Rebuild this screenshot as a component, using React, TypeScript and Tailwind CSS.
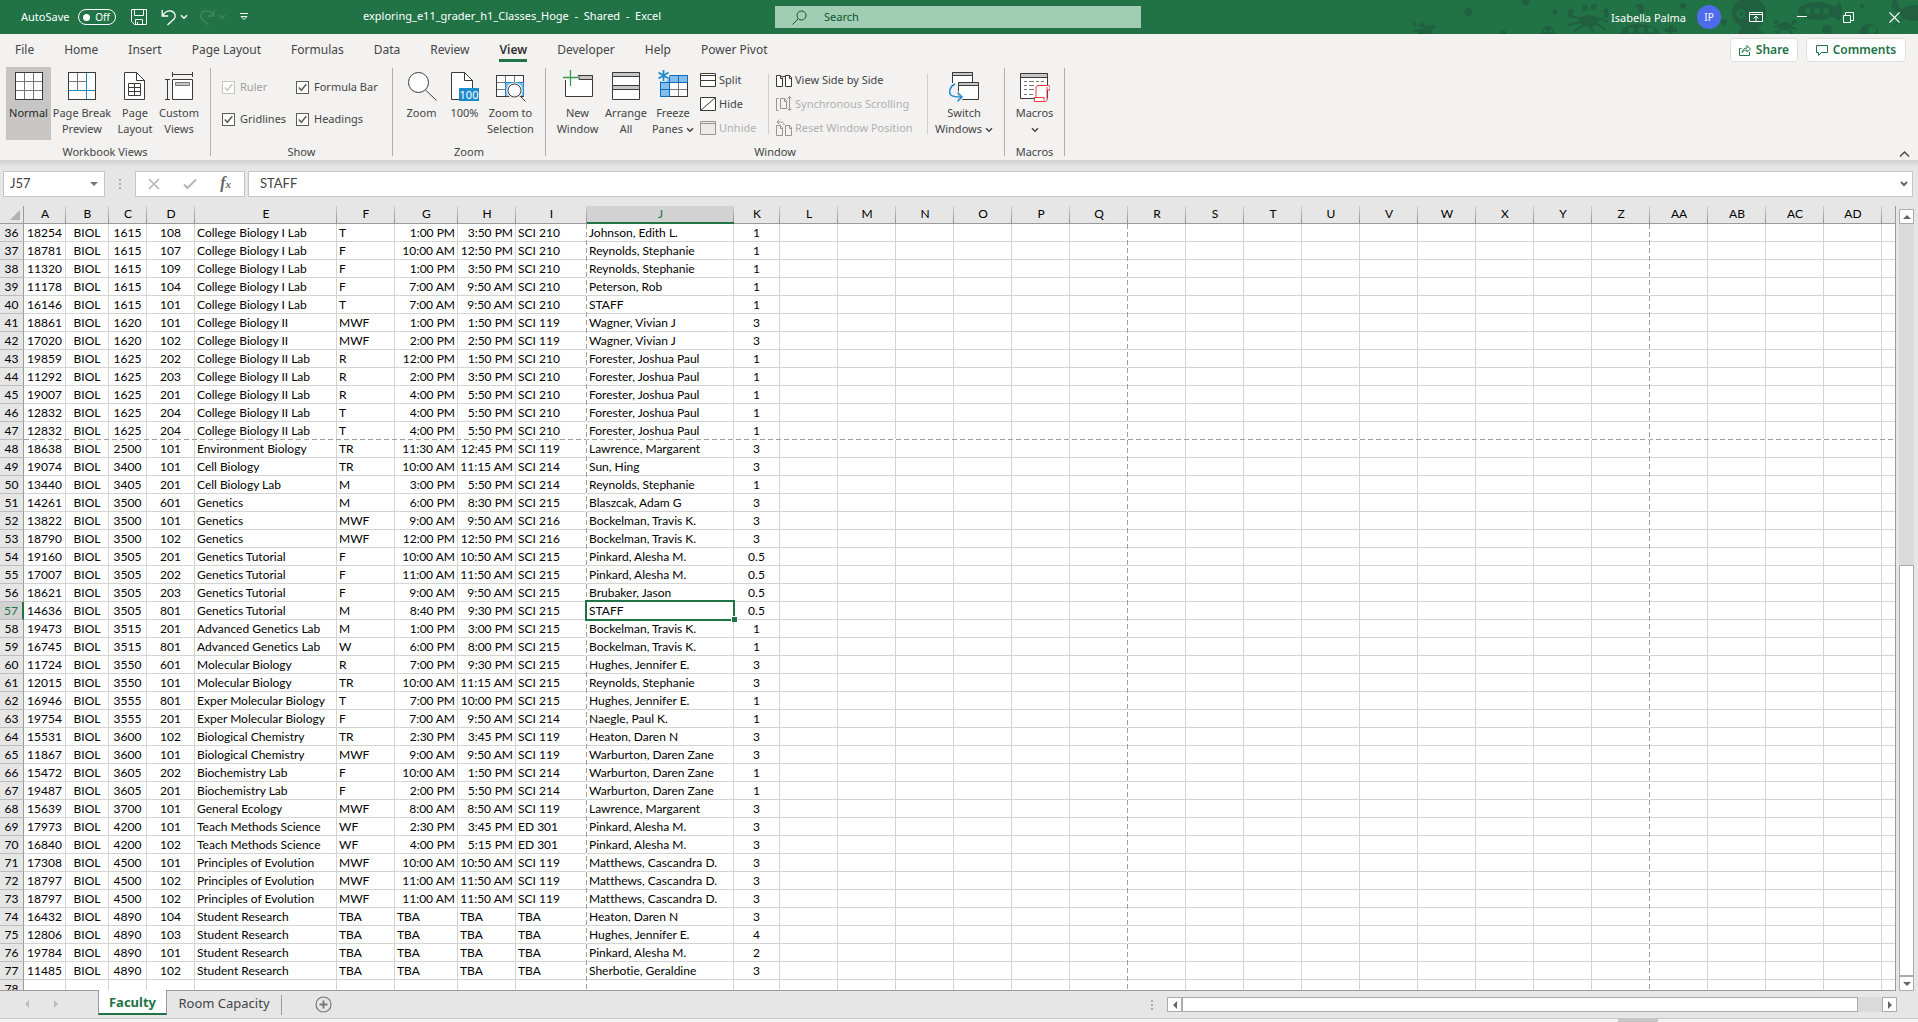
import React, { useState } from "react";

type Row = string[];

const DATA: Row[] = `18254|BIOL|1615|108|College Biology I Lab|T|1:00 PM|3:50 PM|SCI 210|Johnson, Edith L.|1
18781|BIOL|1615|107|College Biology I Lab|F|10:00 AM|12:50 PM|SCI 210|Reynolds, Stephanie|1
11320|BIOL|1615|109|College Biology I Lab|F|1:00 PM|3:50 PM|SCI 210|Reynolds, Stephanie|1
11178|BIOL|1615|104|College Biology I Lab|F|7:00 AM|9:50 AM|SCI 210|Peterson, Rob|1
16146|BIOL|1615|101|College Biology I Lab|T|7:00 AM|9:50 AM|SCI 210|STAFF|1
18861|BIOL|1620|101|College Biology II|MWF|1:00 PM|1:50 PM|SCI 119|Wagner, Vivian J|3
17020|BIOL|1620|102|College Biology II|MWF|2:00 PM|2:50 PM|SCI 119|Wagner, Vivian J|3
19859|BIOL|1625|202|College Biology II Lab|R|12:00 PM|1:50 PM|SCI 210|Forester, Joshua Paul|1
11292|BIOL|1625|203|College Biology II Lab|R|2:00 PM|3:50 PM|SCI 210|Forester, Joshua Paul|1
19007|BIOL|1625|201|College Biology II Lab|R|4:00 PM|5:50 PM|SCI 210|Forester, Joshua Paul|1
12832|BIOL|1625|204|College Biology II Lab|T|4:00 PM|5:50 PM|SCI 210|Forester, Joshua Paul|1
12832|BIOL|1625|204|College Biology II Lab|T|4:00 PM|5:50 PM|SCI 210|Forester, Joshua Paul|1
18638|BIOL|2500|101|Environment Biology|TR|11:30 AM|12:45 PM|SCI 119|Lawrence, Margarent|3
19074|BIOL|3400|101|Cell Biology|TR|10:00 AM|11:15 AM|SCI 214|Sun, Hing|3
13440|BIOL|3405|201|Cell Biology Lab|M|3:00 PM|5:50 PM|SCI 214|Reynolds, Stephanie|1
14261|BIOL|3500|601|Genetics|M|6:00 PM|8:30 PM|SCI 215|Blaszcak, Adam G|3
13822|BIOL|3500|101|Genetics|MWF|9:00 AM|9:50 AM|SCI 216|Bockelman, Travis K.|3
18790|BIOL|3500|102|Genetics|MWF|12:00 PM|12:50 PM|SCI 216|Bockelman, Travis K.|3
19160|BIOL|3505|201|Genetics Tutorial|F|10:00 AM|10:50 AM|SCI 215|Pinkard, Alesha M.|0.5
17007|BIOL|3505|202|Genetics Tutorial|F|11:00 AM|11:50 AM|SCI 215|Pinkard, Alesha M.|0.5
18621|BIOL|3505|203|Genetics Tutorial|F|9:00 AM|9:50 AM|SCI 215|Brubaker, Jason|0.5
14636|BIOL|3505|801|Genetics Tutorial|M|8:40 PM|9:30 PM|SCI 215|STAFF|0.5
19473|BIOL|3515|201|Advanced Genetics Lab|M|1:00 PM|3:00 PM|SCI 215|Bockelman, Travis K.|1
16745|BIOL|3515|801|Advanced Genetics Lab|W|6:00 PM|8:00 PM|SCI 215|Bockelman, Travis K.|1
11724|BIOL|3550|601|Molecular Biology|R|7:00 PM|9:30 PM|SCI 215|Hughes, Jennifer E.|3
12015|BIOL|3550|101|Molecular Biology|TR|10:00 AM|11:15 AM|SCI 215|Reynolds, Stephanie|3
16946|BIOL|3555|801|Exper Molecular Biology|T|7:00 PM|10:00 PM|SCI 215|Hughes, Jennifer E.|1
19754|BIOL|3555|201|Exper Molecular Biology|F|7:00 AM|9:50 AM|SCI 214|Naegle, Paul K.|1
15531|BIOL|3600|102|Biological Chemistry|TR|2:30 PM|3:45 PM|SCI 119|Heaton, Daren N|3
11867|BIOL|3600|101|Biological Chemistry|MWF|9:00 AM|9:50 AM|SCI 119|Warburton, Daren Zane|3
15472|BIOL|3605|202|Biochemistry Lab|F|10:00 AM|1:50 PM|SCI 214|Warburton, Daren Zane|1
19487|BIOL|3605|201|Biochemistry Lab|F|2:00 PM|5:50 PM|SCI 214|Warburton, Daren Zane|1
15639|BIOL|3700|101|General Ecology|MWF|8:00 AM|8:50 AM|SCI 119|Lawrence, Margarent|3
17973|BIOL|4200|101|Teach Methods Science|WF|2:30 PM|3:45 PM|ED 301|Pinkard, Alesha M.|3
16840|BIOL|4200|102|Teach Methods Science|WF|4:00 PM|5:15 PM|ED 301|Pinkard, Alesha M.|3
17308|BIOL|4500|101|Principles of Evolution|MWF|10:00 AM|10:50 AM|SCI 119|Matthews, Cascandra D.|3
18797|BIOL|4500|102|Principles of Evolution|MWF|11:00 AM|11:50 AM|SCI 119|Matthews, Cascandra D.|3
18797|BIOL|4500|102|Principles of Evolution|MWF|11:00 AM|11:50 AM|SCI 119|Matthews, Cascandra D.|3
16432|BIOL|4890|104|Student Research|TBA|TBA|TBA|TBA|Heaton, Daren N|3
12806|BIOL|4890|103|Student Research|TBA|TBA|TBA|TBA|Hughes, Jennifer E.|4
19784|BIOL|4890|101|Student Research|TBA|TBA|TBA|TBA|Pinkard, Alesha M.|2
11485|BIOL|4890|102|Student Research|TBA|TBA|TBA|TBA|Sherbotie, Geraldine|3`
  .split("\n")
  .map((line) => line.split("|"));

const FIRST_ROW = 36;
const ACTIVE_ROW = 57;

const COLUMNS: { name: string; width: string }[] = [
  { name: "A", width: "w-[42px]" },
  { name: "B", width: "w-[43px]" },
  { name: "C", width: "w-[38px]" },
  { name: "D", width: "w-[48px]" },
  { name: "E", width: "w-[142px]" },
  { name: "F", width: "w-[58px]" },
  { name: "G", width: "w-[63px]" },
  { name: "H", width: "w-[58px]" },
  { name: "I", width: "w-[71px]" },
  { name: "J", width: "w-[147px]" },
  { name: "K", width: "w-[46px]" },
  ..."L M N O P Q R S T U V W X Y Z AA AB AC AD".split(" ").map((name) => ({ name, width: "w-[58px]" })),
  { name: "", width: "w-[58px]" },
];

const CENTERED = [0, 1, 2, 3, 10];

function alignment(col: number, value: string) {
  if (CENTERED.includes(col)) return "text-center";
  if ((col === 6 || col === 7) && value !== "TBA") return "text-right";
  return "text-left";
}

/* ---------- small glyphs ---------- */

function Chevron({ className = "" }: { className?: string }) {
  return (
    <svg width="8" height="6" viewBox="0 0 8 6" className={"inline-block shrink-0 align-middle " + className} fill="none" stroke="currentColor" strokeWidth="1.5" aria-hidden="true">
      <path d="M1 1.2 4 4.2 7 1.2" />
    </svg>
  );
}

function Triangle({ dir, className = "" }: { dir: "up" | "down" | "left" | "right"; className?: string }) {
  const d = { up: "M0 6 4 2 8 6Z", down: "M0 2H8L4 6Z", left: "M6 0V8L2 4Z", right: "M2 0V8L6 4Z" }[dir];
  return (
    <svg width="8" height="8" viewBox="0 0 8 8" className={className} fill="currentColor" aria-hidden="true">
      <path d={d} />
    </svg>
  );
}

/* ---------- title bar ---------- */

function SeaPattern() {
  return (
    <svg className="absolute top-0 right-0" width="518" height="34" viewBox="1400 0 518 34" fill="#206040" stroke="#206040" aria-hidden="true">
      <g stroke="none">
        <circle cx="1468.500" cy="12" r="4" />
        <circle cx="1526" cy="1" r="4" />
        <circle cx="1555" cy="12" r="2.500" />
        <circle cx="1503" cy="33" r="3" />
        <path d="M1541 34c0-5 3-8 7-8s7 3 7 8z" />
        <path d="M1418 34c1-5 4-7 8-7s6 3 7 7z" />
        <circle cx="1421" cy="25" r="2" />
        <circle cx="1427" cy="26" r="1.500" />
        <path d="M1413 20c4 2 4 5 2 8-2-2-3-5-2-8zM1428 28c2-3 4-3 7-3 0 4-3 6-6 5z" />
        <ellipse cx="1589" cy="21" rx="10" ry="6" />
        <path d="M1570 8c-4 5-3 10 3 10 0-3 0-4-2-5 2 0 3-1 3-3zM1607 8c3 5 2 10-3 10 0-3 0-4 2-5-2 0-3-1-3-3z" />
        <circle cx="1585" cy="8" r="3" />
        <circle cx="1594" cy="7" r="3" />
        <path d="M1620 34c1-6 8-10 19-10s20 4 20 10z" />
        <path d="M1636 4h5c4 1 3 6 2 9h-4c1-4 0-6-3-7z" />
        <circle cx="1683" cy="6" r="3" />
        <circle cx="1724" cy="22" r="3" />
        <path d="M1669 25h4v3h4v4h-4v2h-4v-2h-4v-4h4z" />
        <path d="M1732 13c0-9 6-15 16-15s18 6 18 14c0 7-4 12-8 15l6 7h-27l5-7c-6-3-10-7-10-14z" />
        <ellipse cx="1817" cy="11" rx="19" ry="9" />
        <path d="M1832 9l8-7c3 5 2 14-1 19l-8-6z" />
        <circle cx="1862" cy="6" r="2.500" />
        <ellipse cx="1785" cy="26" rx="6" ry="4" />
        <path d="M1775 19c-2 4 0 6 4 6l-1-4zM1795 19c2 4 0 6-4 6l1-4z" />
        <circle cx="1827" cy="30" r="5" />
        <circle cx="1869" cy="34" r="10" />
        <ellipse cx="1914" cy="13" rx="13" ry="8" />
        <path d="M1895 -1c-5 4-5 10 2 13l8-2c-5-1-7-4-7-8z" />
      </g>
      <g fill="none" strokeWidth="2">
        <path d="M1580 18l-12-2M1580 22l-12 3M1583 25l-9 7M1598 18l10 4M1597 24l9 6M1590 26l4 7" />
        <path d="M1780 26l-6 1M1781 29l-5 4M1790 27l7 2M1789 29l3 5" />
        <path d="M1904 12l-12 6M1905 17l-12 10" />
        <path d="M1424 27l-3-5M1428 28l-15 4" />
      </g>
      <g fill="#217346" stroke="none">
        <circle cx="1631" cy="30" r="3" />
        <circle cx="1641" cy="30" r="3" />
        <circle cx="1651" cy="30" r="3" />
        <circle cx="1741" cy="14" r="4.500" />
        <circle cx="1808" cy="11" r="3" />
        <circle cx="1817" cy="11" r="3" />
        <circle cx="1826" cy="11" r="3" />
        <circle cx="1872" cy="30" r="4" />
        <circle cx="1545" cy="31" r="1.500" />
        <circle cx="1551" cy="31" r="1.500" />
      </g>
      <circle cx="1741" cy="14" r="2" stroke="none" />
    </svg>
  );
}

function TitleBar() {
  const [autoSave, setAutoSave] = useState(false);
  return (
    <header className="relative flex h-[34px] shrink-0 items-center overflow-hidden bg-[#217346] text-[11px] text-white">
      <SeaPattern />
      <div className="flex w-[363px] shrink-0 items-center pl-[21px]">
        <span className="w-[57px]" id="autosave">AutoSave</span>
        <button role="switch" aria-checked={autoSave} aria-labelledby="autosave" onClick={() => setAutoSave(!autoSave)} className="flex h-4 w-[38px] items-center justify-between rounded-full border border-white pr-[5px] pl-[4px] text-[10px] leading-none">
          <span className="size-[7px] rounded-full bg-white" />
          {autoSave ? "On" : "Off"}
        </button>
        <button aria-label="Save" className="ml-[15px]">
          <svg width="16" height="16" viewBox="0 0 16 16" fill="none" stroke="#fff" aria-hidden="true">
            <path d="M.5.5h15v15H3.500l-3-3zM3.500.5v6h9v-6M4.500 15.500v-5h7v5M6.500 13v2.500" />
          </svg>
        </button>
        <button aria-label="Undo" className="ml-[14px] flex items-center">
          <svg width="16" height="17" viewBox="0 0 16 17" fill="none" stroke="#fff" strokeWidth="1.300" aria-hidden="true">
            <path d="M1.200 1v6h6M1.500 6.500C4 3 7 1.500 10 2c4 .8 5.500 5 3 8l-6.500 6" />
          </svg>
          <Chevron className="ml-[3px]" />
        </button>
        <button aria-label="Redo" disabled className="ml-[11px] flex items-center text-[#438762]">
          <svg width="16" height="17" viewBox="0 0 16 17" fill="none" stroke="#438762" strokeWidth="1.300" aria-hidden="true">
            <path d="M14.800 1v6h-6M14.500 6.500C12 3 9 1.500 6 2c-4 .8-5.500 5-3 8l6.500 6" />
          </svg>
          <Chevron className="ml-[3px]" />
        </button>
        <button aria-label="Customize Quick Access Toolbar" className="ml-[14px]">
          <svg width="8" height="8" viewBox="0 0 8 8" fill="none" stroke="#fff" aria-hidden="true">
            <path d="M0 .5h8M1 3.500h6L4 6.500z" />
          </svg>
        </button>
      </div>
      <h1 className="w-[412px] shrink-0 pb-[2px] whitespace-pre">exploring_e11_grader_h1_Classes_Hoge  -  Shared  -  Excel</h1>
      <label className="flex h-[22px] w-[366px] items-center bg-[#a0cdb4] pl-[17px]">
        <svg width="15" height="15" viewBox="0 0 15 15" fill="none" stroke="#13532f" aria-hidden="true">
          <circle cx="9.500" cy="5.500" r="4.500" />
          <path d="M6 9 .5 14.500" />
        </svg>
        <input aria-label="Search" placeholder="Search" className="ml-[17px] min-w-0 flex-1 bg-transparent outline-none placeholder:text-[#0b5529]" />
      </label>
      <div className="relative ml-auto flex shrink-0 items-center pr-[18px]">
        <span className="pt-[2px]">Isabella Palma</span>
        <span className="ml-[11px] flex size-6 items-center justify-center rounded-full bg-[#4f6bed] text-[10px]">IP</span>
        <button aria-label="Ribbon Display Options" className="ml-7">
          <svg width="14" height="12" viewBox="0 0 14 12" fill="none" stroke="#fff" aria-hidden="true">
            <path d="M.5 1.500h13v9H.5zM.5 3.500h13M7 10V5.500M4.500 7.500 7 5l2.500 2.500" />
          </svg>
        </button>
        <button aria-label="Minimize" className="ml-[34px] h-6">
          <svg width="10" height="10" viewBox="0 0 10 10" stroke="#fff" aria-hidden="true"><path d="M0 4.500h10" /></svg>
        </button>
        <button aria-label="Restore" className="ml-[36px]">
          <svg width="11" height="11" viewBox="0 0 11 11" fill="none" stroke="#fff" aria-hidden="true"><path d="M.5 3.500h7v7h-7zM2.500 3V.5h8v8H8" /></svg>
        </button>
        <button aria-label="Close" className="ml-[35px]">
          <svg width="11" height="11" viewBox="0 0 11 11" stroke="#fff" strokeWidth="1.100" aria-hidden="true"><path d="M.5.5l10 10M10.500.5l-10 10" /></svg>
        </button>
      </div>
    </header>
  );
}

/* ---------- ribbon tabs ---------- */

const TABS = ["File", "Home", "Insert", "Page Layout", "Formulas", "Data", "Review", "View", "Developer", "Help", "Power Pivot"];

function RibbonTabs() {
  return (
    <nav className="flex h-[30px] items-end justify-between pr-3 pb-[2px] pl-[15px] text-xs text-[#444]">
      <div className="flex gap-[30px]">
        {TABS.map((tab) => (
          <button key={tab} className={"border-b-[3px] leading-[18px] " + (tab === "View" ? "border-[#217346] font-semibold text-[#333]" : "border-transparent")}>
            {tab}
          </button>
        ))}
      </div>
      <div className="flex gap-[8px] font-semibold text-[#217346]">
        <button className="flex h-6 w-[68px] items-center justify-center gap-[5px] rounded-sm border border-[#e1dfdd] bg-white">
          <svg width="12" height="12" viewBox="0 0 12 12" fill="none" stroke="#217346" aria-hidden="true">
            <path d="M2.500 4.500h-2v7h10V8M3 8.500c.5-3 2-4.500 5-4.500V1.500L11.500 5 8 8V6C6 6 4.500 6.500 3 8.500z" />
          </svg>
          Share
        </button>
        <button className="flex h-6 w-[100px] items-center justify-center gap-[5px] rounded-sm border border-[#e1dfdd] bg-white">
          <svg width="12" height="11" viewBox="0 0 12 11" fill="none" stroke="#217346" aria-hidden="true">
            <path d="M.5.5h11v7h-6l-3 3v-3h-2z" />
          </svg>
          Comments
        </button>
      </div>
    </nav>
  );
}

/* ---------- ribbon icons ---------- */

const INK = "#3b3a39";

function Icon({ children, w = 30 }: { children: React.ReactNode; w?: number }) {
  return (
    <svg width={w} height="34" viewBox={`0 0 ${w} 34`} fill="none" stroke={INK} strokeWidth="1" className="block shrink-0" aria-hidden="true">
      {children}
    </svg>
  );
}

const NormalIcon = () => (
  <Icon w={28}>
    <path d="M.5 3.500h27v27H.5z" fill="#fff" />
    <path d="M9.500 4v26M18.500 4v26M1 12.500h26M1 21.500h26" stroke="#797775" />
    <path d="M.5 3.500h27v27H.5z" />
  </Icon>
);
const PageBreakIcon = () => (
  <Icon w={28}>
    <path d="M.5 3.500h27v27H.5z" fill="#fff" />
    <path d="M9.500 4v17M1 12.500h17" stroke="#797775" />
    <path d="M.5 3.500h27v27H.5z" />
    <path d="M18.500 4v26M1 21.500h26" stroke="#1e8bcd" />
  </Icon>
);
const PageLayoutIcon = () => (
  <Icon w={22}>
    <path d="M.5 3.500h12l8 8v19H.5z" fill="#fff" />
    <path d="M12.500 3.500v8h8" />
    <path d="M4.500 14.500h12v12h-12zM5 18.500h11M5 22.500h11M10.500 15v11" />
  </Icon>
);
const CustomViewsIcon = () => (
  <Icon w={28}>
    <path d="M7.500 10.500h20v20h-20z" fill="#fff" />
    <path d="M10.500 13.500h14v3h-14z" fill="#c8c6c4" stroke="#797775" />
    <path d="M7.500 3v5M27.500 3v5M8 5.500h19M0 10.500h5M0 30.500h5M2.500 11v19" />
  </Icon>
);
const ZoomIcon = () => (
  <Icon w={30}>
    <circle cx="11.500" cy="13.500" r="10" fill="#fff" />
    <path d="M18.500 21 29.500 31.500" />
  </Icon>
);
const HundredIcon = () => (
  <Icon w={28}>
    <path d="M.5 3.500h13l8 8v19H.5z" fill="#fff" />
    <path d="M13.500 3.500v8h8" />
    <path d="M8 19h20v13H8z" fill="#1e8bcd" stroke="none" />
    <text x="18" y="30" fill="#fff" stroke="none" fontSize="11" textAnchor="middle" fontFamily="Noto Sans, sans-serif">100</text>
  </Icon>
);
const ZoomSelectionIcon = () => (
  <Icon w={30}>
    <path d="M.5 6.500h27v21H.5z" fill="#fff" />
    <path d="M9.500 13.500h18v14h-18z" fill="#83beec" stroke="none" />
    <path d="M9.500 7v20M18.500 7v7M1 13.500h26M1 20.500h9" stroke="#797775" />
    <path d="M.5 6.500h27v21H.5z" />
    <path d="M9.500 27V13.500h18V27" stroke="#1e8bcd" />
    <path d="M23 26l6.500 6.500" />
    <circle cx="18.500" cy="21.500" r="6.500" fill="#fff" stroke="#f3f2f1" strokeWidth="3" />
    <circle cx="18.500" cy="21.500" r="6.500" fill="#fff" />
  </Icon>
);
const NewWindowIcon = () => (
  <Icon w={30}>
    <path d="M2.500 6.500h27v21h-27z" fill="#fff" />
    <path d="M16 6.500h13.500v4H16z" fill="#c8c6c4" />
    <path d="M0 3h15v8H0z" fill="#f3f2f1" stroke="none" />
    <path d="M3 11h12v1H3z" fill="#fff" stroke="none" />
    <path d="M7.500 1v16M0 8.500h15" stroke="#3a9b50" strokeWidth="1.300" />
  </Icon>
);
const ArrangeIcon = () => (
  <Icon w={28}>
    <path d="M.5 3.500h27v27H.5z" fill="#fff" />
    <path d="M.5 3.500h27v4H.5zM.5 16.500h27v4H.5z" fill="#c8c6c4" />
  </Icon>
);
const FreezeIcon = () => (
  <Icon w={30}>
    <path d="M2.500 6.500h27v21h-27z" fill="#fff" />
    <path d="M2.500 6.500h27v7h-18v14h-9z" fill="#83beec" stroke="none" />
    <path d="M20.500 14v13M12 20.500h17" stroke="#797775" />
    <path d="M11.500 27.500h18V14" />
    <path d="M29.500 13.500v-7h-27v21h9M11.500 7v20M20.500 7v6M3 13.500h26M3 20.500h9" stroke="#0f6cbd" />
    <circle cx="5" cy="6.500" r="6.500" fill="#f3f2f1" stroke="none" />
    <path d="M5.500 1v11M.5 3.500l10 6M.5 9.500l10-6" stroke="#1e8bcd" strokeWidth="1.800" />
  </Icon>
);
const SwitchIcon = () => (
  <Icon w={30}>
    <path d="M3.500 3.500h20v17h-20z" fill="#fff" />
    <path d="M3.500 3.500h20v3h-20z" fill="#c8c6c4" />
    <path d="M0 14h12v20H0z" fill="#f3f2f1" stroke="none" />
    <path d="M9.500 13.500h20v17h-20z" fill="#fff" />
    <path d="M9.500 13.500h20v3h-20z" fill="#c8c6c4" />
    <path d="M7 15c-5 2-7 9-3.500 11.500 2 1.500 5 1.500 10 1.500M9 23l5 5-5 4.500" stroke="#f3f2f1" strokeWidth="3" />
    <path d="M6 15c-5 2-7 9-3.500 11.500 2 1.500 5 1.500 10 1.500M8.500 23.500l4.500 4.500-4.500 4.500" stroke="#1e8bcd" strokeWidth="1.400" />
  </Icon>
);
const MacrosIcon = () => (
  <Icon w={30}>
    <path d="M.5 4.500h27v25H.5z" fill="#fff" />
    <path d="M.5 4.500h27v4H.5z" fill="#c8c6c4" />
    <path d="M4 12.500h3M9 12.500h5M16 12.500h3M21 12.500h3M4 16.500h3M9 16.500h5M4 20.500h3M9 20.500h5M4 25.500h3M9 25.500h4" stroke="#797775" />
    <path d="M14.500 32.500h10.500c2 0 2-2 2-3V21h3v-3c0-1-1-1.500-2-1.500H18c-1.500 0-2 1-2 2.500v9.500h-1.500z" fill="#fff" stroke="#e8393c" />
    <path d="M14.500 28.500h9.500v3M27 21v-3" stroke="#e8393c" />
  </Icon>
);

/* ---------- ribbon ---------- */

function BigButton({ icon, lines, width, active, menu }: { icon: React.ReactNode; lines: string[]; width: string; active?: boolean; menu?: boolean }) {
  return (
    <button className={"flex h-[73px] shrink-0 flex-col items-center pt-[2px] " + width + (active ? " bg-[#c8c6c4] text-[#262626]" : "")}>
      {icon}
      <span className="mt-[2px] leading-4 whitespace-nowrap">
        {lines.map((line, i) => (
          <span key={i} className="block h-4">
            {line}
            {menu && i === lines.length - 1 && <Chevron className={line ? "ml-[3px]" : ""} />}
          </span>
        ))}
      </span>
    </button>
  );
}

function Group({ label, children, className = "", inner = "" }: { label: string; children: React.ReactNode; className?: string; inner?: string }) {
  return (
    <section aria-label={label} className={"flex h-[88px] shrink-0 flex-col border-r border-[#b1b0af] " + className}>
      <div className={"-mt-px flex h-[77px] shrink-0 " + inner}>{children}</div>
      <div className="text-center leading-4">{label}</div>
    </section>
  );
}

function Check({ label, on, disabled }: { label: string; on: boolean; disabled?: boolean }) {
  return (
    <label className={"flex h-4 items-center gap-[5px] whitespace-nowrap " + (disabled ? "text-[#a19f9d]" : "")}>
      <span className="grid size-[13px] place-items-center">
        <input type="checkbox" defaultChecked={on} disabled={disabled} className="peer col-start-1 row-start-1 size-[13px] appearance-none border border-[#605e5c] bg-white disabled:border-[#c8c6c4]" />
        <svg width="9" height="9" viewBox="0 0 9 9" fill="none" stroke={disabled ? "#c8c6c4" : "#605e5c"} strokeWidth="1.600" className="pointer-events-none invisible col-start-1 row-start-1 peer-checked:visible" aria-hidden="true">
          <path d="M.8 4.500 3.300 7.200 8.300 1.300" />
        </svg>
      </span>
      {label}
    </label>
  );
}

function SmallButton({ icon, label, disabled }: { icon: React.ReactNode; label: string; disabled?: boolean }) {
  return (
    <button disabled={disabled} className={"flex h-6 shrink-0 items-center gap-[3px] whitespace-nowrap " + (disabled ? "text-[#b1b0af]" : "")}>
      <svg width="16" height="18" viewBox="0 0 16 18" fill="none" stroke={disabled ? "#979593" : INK} className="shrink-0" aria-hidden="true">
        {icon}
      </svg>
      {label}
    </button>
  );
}

const pages = "M.5 4.500h4l2 2v9h-6zM9.500 4.500h4l2 2v9h-6zM4.500 4.500v3h2M13.500 4.500v3h2M6.500 5.500h3";

function Ribbon() {
  return (
    <div className="flex h-[96px] pt-[4px] text-[11px] text-[#444]">
      <Group label="Workbook Views" className="w-[211px]" inner="pl-[6px]">
        <BigButton icon={<NormalIcon />} lines={["Normal"]} width="w-[45px]" active />
        <BigButton icon={<PageBreakIcon />} lines={["Page Break", "Preview"]} width="w-[62px]" />
        <BigButton icon={<PageLayoutIcon />} lines={["Page", "Layout"]} width="w-[44px]" />
        <BigButton icon={<CustomViewsIcon />} lines={["Custom", "Views"]} width="w-[44px]" />
      </Group>
      <Group label="Show" className="w-[182px]">
        <div className="grid grid-cols-[74px_1fr] content-start gap-y-4 pt-[12px] pl-[11px]">
          <Check label="Ruler" on disabled />
          <Check label="Formula Bar" on />
          <Check label="Gridlines" on />
          <Check label="Headings" on />
        </div>
      </Group>
      <Group label="Zoom" className="w-[153px]" inner="pl-[8px]">
        <BigButton icon={<ZoomIcon />} lines={["Zoom"]} width="w-[41px]" />
        <BigButton icon={<HundredIcon />} lines={["100%"]} width="w-[45px]" />
        <BigButton icon={<ZoomSelectionIcon />} lines={["Zoom to", "Selection"]} width="w-[47px]" />
      </Group>
      <Group label="Window" className="w-[459px]" inner="pl-[8px]">
        <BigButton icon={<NewWindowIcon />} lines={["New", "Window"]} width="w-[47px]" />
        <BigButton icon={<ArrangeIcon />} lines={["Arrange", "All"]} width="w-[50px]" />
        <BigButton icon={<FreezeIcon />} lines={["Freeze", "Panes"]} width="w-[44px]" menu />
        <div className="my-[7px] ml-[5px] flex h-[60px] w-[69px] shrink-0 flex-col justify-center border-r border-[#d2d0ce]">
          <SmallButton label="Split" icon={<><path d="M.5 2.500h15v13H.5z" fill="#fff" /><path d="M.5 4.500h15M.5 9.500h15" /></>} />
          <SmallButton label="Hide" icon={<><path d="M.5 2.500h15v13H.5z" fill="#fff" /><path d="M.5 15.500l15-13" /></>} />
          <SmallButton label="Unhide" disabled icon={<path d="M.5 2.500h15v13H.5zM.5 4.500h15" fill="#edebe9" />} />
        </div>
        <div className="my-[7px] flex h-[60px] w-[159px] shrink-0 flex-col justify-center border-r border-[#d2d0ce] pl-[7px]">
          <SmallButton label="View Side by Side" icon={<path d={pages} fill="#fff" />} />
          <SmallButton label="Synchronous Scrolling" disabled icon={<path d="M2.500 3.500h-2v12h2M4.500 3.500h4l2 2v8h-6zM8.500 3.500v3h2M13.500 1.500v14M11.500 3.500l2-2 2 2M11.500 13.500l2 2 2-2" />} />
          <SmallButton label="Reset Window Position" disabled icon={<><path d="M.5 6.500h4l2 2v8h-6zM9.500 6.500h4l2 2v8h-6zM4.500 6.500v3h2M13.500 6.500v3h2" /><path d="M3.500.5 1 3l2.500 2.500M1 3h4c2 0 3 1 3 3" /></>} />
        </div>
        <div className="w-[2px]" />
        <BigButton icon={<SwitchIcon />} lines={["Switch", "Windows"]} width="w-[68px]" menu />
      </Group>
      <Group label="Macros" className="w-[60px]" inner="justify-center">
        <BigButton icon={<MacrosIcon />} lines={["Macros", ""]} width="w-[52px]" menu />
      </Group>
      <button aria-label="Collapse the Ribbon" className="mr-[8px] mb-[2px] ml-auto self-end">
        <svg width="11" height="8" viewBox="0 0 11 8" fill="none" stroke="#444" strokeWidth="1.400" aria-hidden="true"><path d="M1 6.500 5.500 2 10 6.500" /></svg>
      </button>
    </div>
  );
}

/* ---------- formula bar ---------- */

function FormulaBar() {
  return (
    <div className="flex h-[46px] shrink-0 items-start bg-[#e6e6e6] bg-[linear-gradient(#cfcfcf,#e6e6e6_7px)] pt-[11px] pr-[5px] pl-[3px] font-[Lato,sans-serif] text-[13px] text-[#444]">
      <div className="flex h-[26px] w-[102px] shrink-0 items-center border border-[#c6c6c6] bg-white">
        <input aria-label="Name Box" defaultValue="J57" className="min-w-0 flex-1 pl-[6px] outline-none" />
        <button aria-label="Named ranges" className="pr-[6px] text-[#767676]"><Triangle dir="down" /></button>
      </div>
      <div className="flex h-[26px] w-[30px] shrink-0 flex-col items-center justify-center gap-[2px]" aria-hidden="true">
        <span className="size-[2px] bg-[#ababab]" />
        <span className="size-[2px] bg-[#ababab]" />
        <span className="size-[2px] bg-[#ababab]" />
      </div>
      <div className="flex h-[26px] w-[110px] shrink-0 items-center justify-between border border-[#c6c6c6] bg-white pr-[13px] pl-[12px]">
        <button aria-label="Cancel" disabled>
          <svg width="12" height="12" viewBox="0 0 12 12" stroke="#b5b5b5" strokeWidth="1.600" aria-hidden="true"><path d="M1 1l10 10M11 1 1 11" /></svg>
        </button>
        <button aria-label="Enter" disabled>
          <svg width="14" height="12" viewBox="0 0 14 12" fill="none" stroke="#b5b5b5" strokeWidth="2" aria-hidden="true"><path d="M1 6.500 4.500 10 13 1.500" /></svg>
        </button>
        <button aria-label="Insert Function" className="pb-[2px] font-['Liberation_Serif',serif] text-base leading-4 font-bold text-[#666] italic">
          f<span className="text-[11px]">x</span>
        </button>
      </div>
      <div className="ml-[3px] flex h-[26px] flex-1 items-center border border-[#c6c6c6] bg-white">
        <input aria-label="Formula Bar" defaultValue="STAFF" className="min-w-0 flex-1 pl-[11px] outline-none" />
        <button aria-label="Expand Formula Bar" className="flex pr-1 text-[#666]">
          <svg width="8" height="6" viewBox="0 0 8 6" fill="none" stroke="currentColor" strokeWidth="2" aria-hidden="true"><path d="M1 1 4 4 7 1" /></svg>
        </button>
      </div>
    </div>
  );
}

/* ---------- worksheet ---------- */

const H_DASH = "bg-[repeating-linear-gradient(90deg,#a0a0a0_0_5px,#fff_5px_8px)]";
const V_DASH = "bg-[repeating-linear-gradient(#a0a0a0_0_5px,#fff_5px_8px)]";

function Sheet() {
  return (
    <div className="relative min-w-0 flex-1 overflow-hidden border-r border-b border-[#9b9b9b] bg-white">
      <table className="w-[1940px] table-fixed border-separate border-spacing-0 font-[Lato,sans-serif] text-xs text-black [font-variant-ligatures:none]">
        <colgroup>
          <col className="w-[24px]" />
          {COLUMNS.map((c) => (
            <col key={c.name} className={c.width} />
          ))}
        </colgroup>
        <thead>
          <tr>
            <th aria-label="Select all" className="h-[17px] border-r border-b border-[#9b9b9b] bg-[#e6e6e6] p-0">
              <svg width="10" height="10" viewBox="0 0 10 10" fill="#b1b1b1" className="mr-[3px] ml-auto block" aria-hidden="true"><path d="M10 0v10H0z" /></svg>
            </th>
            {COLUMNS.map((c) => (
              <th
                key={c.name}
                scope="col"
                className={
                  "h-[18px] bg-[linear-gradient(#d0d0d0,#8f8f8f)] bg-[length:1px_100%] bg-right bg-no-repeat p-0 align-top leading-[16px] font-normal " +
                  (c.name === "J" ? "border-b-2 border-[#217346] bg-[#d2d2d2] text-[#217346]" : "border-b border-[#9b9b9b] bg-[#e6e6e6]")
                }
              >
                {c.name}
              </th>
            ))}
          </tr>
        </thead>
        <tbody>
          {[...DATA, []].map((row, r) => {
            const n = FIRST_ROW + r;
            const active = n === ACTIVE_ROW;
            return (
              <tr key={n}>
                <th
                  scope="row"
                  className={
                    "h-[18px] border-b border-b-[#bdbdbd] p-0 text-center leading-[17px] font-normal " +
                    (active ? "border-r-2 border-r-[#217346] bg-[#d2d2d2] text-[#217346]" : "border-r border-r-[#9b9b9b] bg-[#e6e6e6]")
                  }
                >
                  {n}
                </th>
                {COLUMNS.map((c, i) => {
                  const value = row[i] ?? "";
                  return (
                    <td key={c.name} className={"relative h-[18px] border-r border-b border-[#d4d4d4] px-[2px] py-0 leading-[17px] whitespace-nowrap " + alignment(i, value)}>
                      {value}
                      {active && c.name === "J" && (
                        <span className="absolute -inset-[2px] z-10 border-2 border-[#217346]">
                          <span className="absolute -right-[4px] -bottom-[3px] size-[6px] border-t border-l border-white bg-[#217346]" />
                        </span>
                      )}
                    </td>
                  );
                })}
              </tr>
            );
          })}
        </tbody>
      </table>
      <div className={"absolute top-[233px] right-0 left-[24px] h-px " + H_DASH} />
      <div className={"absolute top-[18px] bottom-0 left-[586px] w-px " + V_DASH} />
      <div className={"absolute top-[18px] bottom-0 left-[1127px] w-px " + V_DASH} />
      <div className={"absolute top-[18px] bottom-0 left-[1649px] w-px " + V_DASH} />
    </div>
  );
}

function VerticalScroll() {
  return (
    <div className="flex w-[22px] shrink-0 flex-col bg-[#e6e6e6] pt-[3px] pl-[3px] text-[#666]">
      <button aria-label="Scroll up" className="grid size-[15px] shrink-0 place-items-center border border-[#ababab] bg-white"><Triangle dir="up" /></button>
      <div className="flex w-[15px] flex-1 flex-col bg-[#dadada]">
        <div className="flex-[342]" />
        <div className="flex-[410] border border-[#ababab] bg-white" />
      </div>
      <button aria-label="Scroll down" className="grid size-[15px] shrink-0 place-items-center border border-[#ababab] bg-white"><Triangle dir="down" /></button>
    </div>
  );
}

function SheetBar() {
  return (
    <footer className="shrink-0 bg-[#e6e6e6]">
      <div className="flex h-[27px] items-start">
        <div className="flex h-[25px] w-[98px] shrink-0 items-center gap-[21px] pl-[23px] text-[#bdbdbd]">
          <button aria-label="Previous sheet"><Triangle dir="left" /></button>
          <button aria-label="Next sheet"><Triangle dir="right" /></button>
        </div>
        <button className="relative -mt-px h-[25px] w-[69px] border-x border-b-2 border-x-[#9b9b9b] border-b-[#217346] bg-white text-[13px] leading-[22px] font-bold text-[#217346]">Faculty</button>
        <button className="h-[24px] w-[114px] text-[13px] leading-6 text-[#444]">Room Capacity</button>
        <div className="mt-1 h-5 w-px bg-[#9b9b9b]" />
        <button aria-label="New sheet" className="mt-[5px] ml-[33px]">
          <svg width="17" height="17" viewBox="0 0 17 17" fill="none" stroke="#767676" aria-hidden="true">
            <circle cx="8.500" cy="8.500" r="7.500" strokeWidth="1.200" />
            <path d="M8.500 4.500v8M4.500 8.500h8" strokeWidth="1.800" />
          </svg>
        </button>
        <div className="mt-[6px] ml-auto flex h-[15px] w-[748px] text-[#666]">
          <div className="flex w-[6px] flex-col items-center justify-center gap-[2px]" aria-hidden="true">
            <span className="size-[2px] bg-[#ababab]" />
            <span className="size-[2px] bg-[#ababab]" />
            <span className="size-[2px] bg-[#ababab]" />
          </div>
          <button aria-label="Scroll left" className="ml-[12px] grid size-[15px] shrink-0 place-items-center border border-[#ababab] bg-white"><Triangle dir="left" /></button>
          <div className="flex flex-1 bg-[#dadada]">
            <div className="mr-[24px] flex-1 border border-[#ababab] bg-white" />
          </div>
          <button aria-label="Scroll right" className="grid size-[15px] shrink-0 place-items-center border border-[#ababab] bg-white"><Triangle dir="right" /></button>
        </div>
        <div className="w-[21px] shrink-0" />
      </div>
      <div className="flex h-1 justify-end border-t border-[#c6c6c6] bg-[#f3f2f1] pr-[260px]">
        <div className="h-full w-10 bg-[#c8c6c4]" />
      </div>
    </footer>
  );
}

export default function App() {
  return (
    <div className="flex h-screen flex-col overflow-hidden bg-[#e6e6e6] font-['Noto_Sans',sans-serif]">
      <TitleBar />
      <div className="shrink-0 bg-[#f3f2f1]">
        <RibbonTabs />
        <Ribbon />
      </div>
      <FormulaBar />
      <main className="flex min-h-0 flex-1">
        <Sheet />
        <VerticalScroll />
      </main>
      <SheetBar />
    </div>
  );
}
